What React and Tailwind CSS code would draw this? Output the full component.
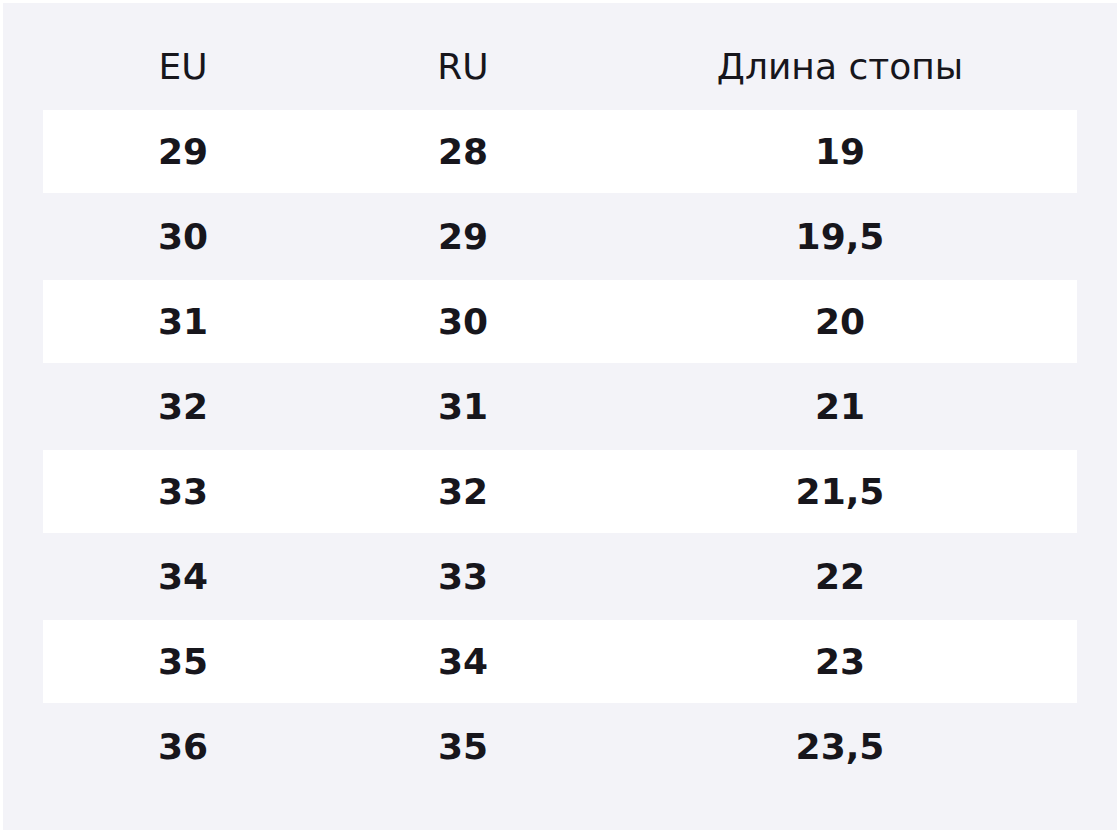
const rows = [
  ['29', '28', '19'],
  ['30', '29', '19,5'],
  ['31', '30', '20'],
  ['32', '31', '21'],
  ['33', '32', '21,5'],
  ['34', '33', '22'],
  ['35', '34', '23'],
  ['36', '35', '23,5'],
];

export default function App() {
  return (
    <div className="bg-white p-[3px] font-['DejaVu_Sans',sans-serif] text-[#17161c]">
      <div className="bg-[#f3f3f8] px-10 pt-10 pb-[42px] flex flex-col gap-[2px]">
        <div className="grid grid-cols-[280px_280px_1fr] h-[65px] pt-[6px] leading-none text-center text-[36px]">
          <div>EU</div>
          <div>RU</div>
          <div>Длина стопы</div>
        </div>
        {rows.map((r, i) => (
          <div
            key={i}
            className={`grid grid-cols-[280px_280px_1fr] h-[83px] items-center text-center text-[36px] font-bold ${i % 2 === 0 ? 'bg-white' : ''}`}
          >
            {r.map((c, j) => (
              <div key={j}>{c}</div>
            ))}
          </div>
        ))}
      </div>
    </div>
  );
}
